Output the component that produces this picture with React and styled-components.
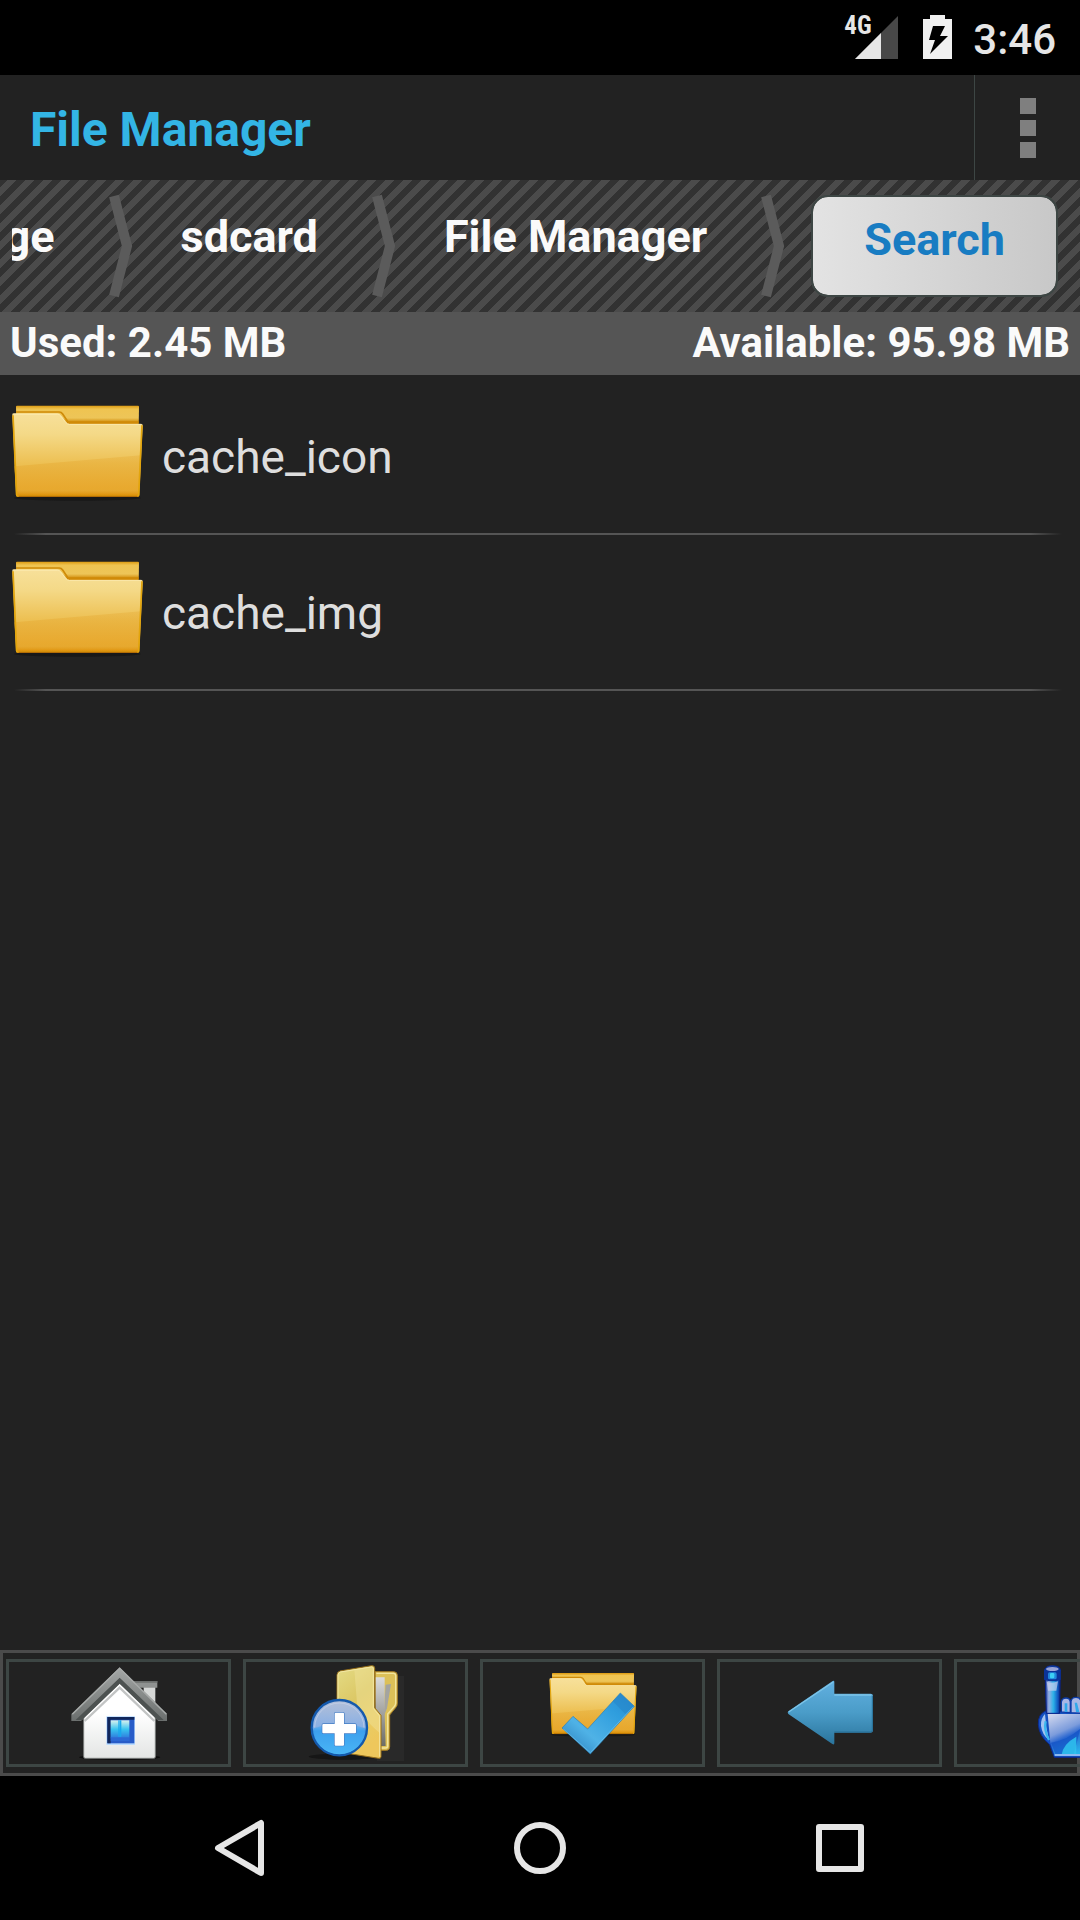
import React from 'react';
import styled, { createGlobalStyle } from 'styled-components';

const crumbs = ['storage', 'sdcard', 'File Manager'];
const folders = ['cache_icon', 'cache_img'];

const FolderShape = ({ id }) => (
  <>
    <defs>
      <linearGradient id={`${id}-back`} x1="0" y1="0" x2="0" y2="1">
        <stop offset="0" stopColor="#dc9a10" />
        <stop offset="0.04" stopColor="#efc451" />
        <stop offset="0.14" stopColor="#edc558" />
        <stop offset="0.19" stopColor="#d08a08" />
        <stop offset="1" stopColor="#c98208" />
      </linearGradient>
      <linearGradient id={`${id}-front`} x1="0" y1="0" x2="0" y2="1">
        <stop offset="0" stopColor="#f7e09a" />
        <stop offset="0.25" stopColor="#f4d987" />
        <stop offset="0.6" stopColor="#edc053" />
        <stop offset="0.92" stopColor="#e8b03a" />
        <stop offset="0.97" stopColor="#e09510" />
        <stop offset="1" stopColor="#b86e04" />
      </linearGradient>
      <linearGradient id={`${id}-low`} x1="0" y1="0" x2="0" y2="1">
        <stop offset="0" stopColor="#e5aa35" stopOpacity="0.35" />
        <stop offset="0.75" stopColor="#e8a62a" stopOpacity="0.7" />
        <stop offset="1" stopColor="#e09510" stopOpacity="0" />
      </linearGradient>
    </defs>
    <ellipse cx="232" cy="354" rx="190" ry="8" fill="#181818" />
    <path d="M48 80q0-3 3-3H414q3 0 3 3L413 340H52z" fill={`url(#${id}-back)`} />
    <path d="M48 96H178q6 0 10 6L204 126H416" fill="none" stroke="#cf8b08" strokeWidth="5" />
    <path
      d="M37 103q0-3 4-3H172q7 0 10 5l16 21q4 6 10 6H424q4 0 4 4L418 346q0 5-5 5H53q-5 0-5-5z"
      fill={`url(#${id}-front)`}
    />
    <path d="M43 259L422 226L416 350H50z" fill={`url(#${id}-low)`} />
    <path d="M39 106L50 345Q50 348 54 348H412Q416 348 416 345L426 136" fill="none" stroke="#e3a50c" strokeWidth="5" />
    <path d="M56 349H412" stroke="#b36c06" strokeWidth="4" />
    <path d="M42 103H172q7 0 10 5l16 20q4 5 10 5H424" fill="none" stroke="#fbe9ac" strokeWidth="3" />
  </>
);

const HomeIcon = () => (
  <svg viewBox="212 75 288 288" aria-hidden="true">
    <defs>
      <linearGradient id="wall" x1="0" y1="0" x2="0" y2="1">
        <stop offset="0.4" stopColor="#ffffff" />
        <stop offset="1" stopColor="#e3e5e4" />
      </linearGradient>
      <linearGradient id="roof" x1="0" y1="0" x2="0" y2="1">
        <stop offset="0" stopColor="#a4a7a6" />
        <stop offset="1" stopColor="#6b6f6e" />
      </linearGradient>
      <linearGradient id="pane" x1="0" y1="0" x2="0" y2="1">
        <stop offset="0" stopColor="#d9f2ee" />
        <stop offset="0.5" stopColor="#38c4f0" />
        <stop offset="1" stopColor="#2f78dc" />
      </linearGradient>
    </defs>
    <ellipse cx="358" cy="352" rx="122" ry="8" fill="#0c0c0c" />
    <path d="M430 140H465V200L430 165z" fill="#d6d8d7" />
    <path d="M400 123H471V143H412z" fill="#8f9291" />
    <path d="M400 123H471V128H404z" fill="#6b6e6d" />
    <path d="M358 128L250 230V350q0 5 5 5H460q5 0 5-5V230z" fill="url(#wall)" stroke="#777b7a" strokeWidth="3" />
    <path d="M253 243L358 143L462 243" fill="none" stroke="#c2c4c4" strokeWidth="7" />
    <path d="M358 82L501 222V243H474L358 131L242 243H213V222z" fill="url(#roof)" />
    <path d="M358 113L490 240H472L358 131L244 240H226z" fill="#4d5251" />
    <path d="M216 223L358 85L498 223" fill="none" stroke="#a8abaa" strokeWidth="4" />
    <rect x="318" y="229" width="86" height="86" rx="2" fill="#b9dcff" />
    <rect x="321" y="231" width="81" height="79" fill="#285cc8" />
    <path d="M321 231H402V239H331V310H321z" fill="#12275a" />
    <rect x="331" y="241" width="56" height="54" fill="url(#pane)" />
    <path d="M356 241V290M361 241V290" stroke="#18a8ee" strokeWidth="4" />
    <path d="M331 292H388V303H331z" fill="#2c68d4" />
  </svg>
);

const NewFolderIcon = () => (
  <svg viewBox="233 75 288 288" aria-hidden="true">
    <defs>
      <linearGradient id="cover" x1="0" y1="0" x2="0.4" y2="1">
        <stop offset="0" stopColor="#e4dc86" />
        <stop offset="0.45" stopColor="#dcc866" />
        <stop offset="0.75" stopColor="#e8cc64" />
        <stop offset="1" stopColor="#eec75c" />
      </linearGradient>
      <linearGradient id="paper" x1="0" y1="0" x2="0" y2="1">
        <stop offset="0" stopColor="#dcdcdc" />
        <stop offset="1" stopColor="#6c6c66" />
      </linearGradient>
      <linearGradient id="badge" x1="0" y1="0" x2="0" y2="1">
        <stop offset="0" stopColor="#b4c0d8" />
        <stop offset="0.48" stopColor="#8ab0e4" />
        <stop offset="0.56" stopColor="#3a98ea" />
        <stop offset="1" stopColor="#52c4fa" />
      </linearGradient>
    </defs>
    <rect x="440" y="108" width="81" height="255" fill="#292929" />
    <ellipse cx="340" cy="350" rx="105" ry="9" fill="#161616" />
    <path d="M434 95H490q11 0 11 11V190q0 8-5 13L478 225V320q0 11-10 11H440z" fill="#dcc058" stroke="#a37a24" strokeWidth="3" />
    <path d="M438 100H489q7 0 7 7V188q0 7-4 11L472 222V317q0 7-7 7H440" fill="none" stroke="#f2e49c" strokeWidth="4" />
    <path d="M466 134L482 132L470 205L460 230z" fill="#a4a4a0" />
    <path d="M436 112H463V222L466 318H446V225L436 205z" fill="url(#paper)" />
    <path d="M320 105q0-9 9-12L424 77q9-1 9 8V203L452 226V350q0 6-7 5L320 335z" fill="url(#cover)" stroke="#98701c" strokeWidth="3" />
    <path d="M372 88L424 80q5 0 5 6V205L449 229V280Q390 230 380 190z" fill="#f2e7a2" opacity="0.4" />
    <path d="M323 180V105q0-7 7-9L423 81q6-1 6 6V205L448 228V350" fill="none" stroke="#f3e7a4" strokeWidth="3" />
    <circle cx="327" cy="263" r="83" fill="url(#badge)" stroke="#1459ac" strokeWidth="7" />
    <path d="M251 266A76 76 0 0 0 403 266Q330 230 251 266z" fill="#40a8f2" opacity="0.5" />
    <path d="M253 263A74 74 0 0 1 401 263" fill="none" stroke="#c4d2ea" strokeWidth="3" opacity="0.7" />
    <path
      d="M316 218H338q3 0 3 3V252H374q3 0 3 3V277q0 3-3 3H341V314q0 3-3 3H316q-3 0-3-3V280H279q-3 0-3-3V255q0-3 3-3H313V221q0-3 3-3z"
      fill="#fff"
      stroke="#477ec4"
      strokeWidth="4"
      paintOrder="stroke"
    />
  </svg>
);

const SelectIcon = () => (
  <svg viewBox="224 75 288 288" aria-hidden="true">
    <defs>
      <linearGradient id="tick" x1="0" y1="1" x2="1" y2="0">
        <stop offset="0" stopColor="#2678b8" />
        <stop offset="0.35" stopColor="#4fb2e6" />
        <stop offset="0.7" stopColor="#2f9ede" />
        <stop offset="1" stopColor="#2888cc" />
      </linearGradient>
    </defs>
    <g transform="translate(213 48) scale(0.667)">
      <FolderShape id="select-folder" />
    </g>
    <path d="M275 264L308 229L352 267L450 159L492 199L360 342z" fill="url(#tick)" stroke="#2b7fb6" strokeWidth="2" />
    <path d="M279 267L360 338L489 200" fill="none" stroke="#6cc4f0" strokeWidth="3" opacity="0.7" />
    <path d="M428 184L450 161L490 199L465 222z" fill="#2484c8" opacity="0.5" />
  </svg>
);

const BackIcon = () => (
  <svg viewBox="245 75 288 288" aria-hidden="true">
    <defs>
      <linearGradient id="arrow" x1="0" y1="0" x2="0" y2="1">
        <stop offset="0" stopColor="#62b0e0" />
        <stop offset="0.5" stopColor="#4a9cc8" />
        <stop offset="1" stopColor="#2a749c" />
      </linearGradient>
    </defs>
    <path d="M264 214L396 124q6-4 6 3V161H511q7 0 7 7V270q0 8-7 8H402V309q0 7-6 3L264 222q-4-4 0-8z" fill="url(#arrow)" />
    <path d="M265 216L399 126M402 165H513" fill="none" stroke="#7cc4e8" strokeWidth="4" />
    <path d="M516 168V270q0 6-6 6H402" fill="none" stroke="#276f96" strokeWidth="3" />
  </svg>
);

const TouchIcon = () => (
  <svg viewBox="956 75 288 288" aria-hidden="true">
    <defs>
      <linearGradient id="palm" x1="0" y1="0" x2="0.5" y2="1">
        <stop offset="0" stopColor="#d8dcf0" />
        <stop offset="0.45" stopColor="#7c9cdc" />
        <stop offset="0.6" stopColor="#2c68d0" />
        <stop offset="1" stopColor="#28b4ec" />
      </linearGradient>
      <linearGradient id="finger" x1="0" y1="0" x2="1" y2="0">
        <stop offset="0" stopColor="#0a2c94" />
        <stop offset="0.25" stopColor="#98b0e4" />
        <stop offset="0.55" stopColor="#2cb0e8" />
        <stop offset="0.8" stopColor="#1464c8" />
        <stop offset="1" stopColor="#0a2484" />
      </linearGradient>
    </defs>
    <path d="M1038 212Q1012 222 1014 254Q1016 288 1048 314L1062 352H1164L1182 280V220Z" fill="#1450c0" stroke="#0b2a92" strokeWidth="3" />
    <path d="M1034 222Q1020 236 1022 258Q1026 286 1046 300L1038 262Z" fill="#a4c4f0" />
    <path d="M1036 244Q1030 270 1046 300" fill="none" stroke="#3bb6ee" strokeWidth="7" />
    <path d="M1034 88q2-10 22-11q22 1 24 11L1078 220H1038z" fill="url(#finger)" stroke="#0a2388" strokeWidth="3" />
    <path d="M1031 91q5-13 25-13t25 13V119q-25 9-50 0z" fill="#0b3398" />
    <ellipse cx="1056" cy="87" rx="19" ry="6" fill="#98a4d8" />
    <rect x="1043" y="97" width="26" height="21" rx="5" fill="#2188dc" />
    <rect x="1049" y="99" width="13" height="16" rx="4" fill="#3cd0f4" />
    <path d="M1039 125Q1056 132 1073 124L1068 152H1043z" fill="#cbd0ec" opacity="0.7" />
    <path d="M1083 216V186q2-12 14-12t13 12V218zM1112 218V184q2-12 15-12t15 12V220zM1145 222V194q2-12 14-12t13 12V224z" fill="#a9b7e4" stroke="#0c3ca8" strokeWidth="4" />
    <path d="M1093 190H1101V216H1093zM1123 188L1130 188L1137 216H1127zM1156 196H1164V220H1156z" fill="#30a8ea" />
    <path d="M1042 222H1180V278L1162 348H1064L1050 308Z" fill="url(#palm)" />
    <path d="M1052 308Q1100 300 1140 266L1120 345H1066z" fill="#0f50c4" opacity="0.65" />
    <path d="M1084 344Q1088 312 1128 290V344z" fill="#30c4ee" opacity="0.85" />
    <path d="M1063 345H1162" stroke="#8cb8f0" strokeWidth="6" />
  </svg>
);

const tools = [
  { label: 'Home', Icon: HomeIcon },
  { label: 'New folder', Icon: NewFolderIcon },
  { label: 'Select', Icon: SelectIcon },
  { label: 'Back', Icon: BackIcon },
  { label: 'Touch', Icon: TouchIcon },
];

const Chevron = () => (
  <ChevronIcon viewBox="0 0 32 108" aria-hidden="true">
    <path d="M7 4L20 54L7 104" fill="none" stroke="#5b5b5b" strokeWidth="10" />
  </ChevronIcon>
);

const App = () => (
  <Screen>
    <GlobalStyle />
    <StatusBar>
      <Network>
        <NetworkType>4G</NetworkType>
        <svg width="43" height="43" viewBox="0 0 43 43" aria-hidden="true">
          <path d="M43 0V43H0z" fill="#484848" />
          <path d="M26 17V43H0z" fill="#e6e6e6" />
        </svg>
      </Network>
      <svg width="29" height="44" viewBox="0 0 29 44" aria-hidden="true">
        <path d="M7 0H22V4H29V44H0V4H7z" fill="#f0f0f0" />
        <path d="M10 11H22L17 21H25L7 39L12 25H6z" fill="#000" />
      </svg>
      <Clock>3:46</Clock>
    </StatusBar>

    <TitleBar>
      <Title>File Manager</Title>
      <MenuButton aria-label="More options">
        <Dot />
        <Dot />
        <Dot />
      </MenuButton>
    </TitleBar>

    <PathBar>
      <Crumbs aria-label="Path">
        {crumbs.map(crumb => (
          <React.Fragment key={crumb}>
            <Crumb>{crumb}</Crumb>
            <Chevron />
          </React.Fragment>
        ))}
      </Crumbs>
      <SearchButton>Search</SearchButton>
    </PathBar>

    <Storage>
      <span>Used: 2.45 MB</span>
      <span>Available: 95.98 MB</span>
    </Storage>

    <List>
      {folders.map(name => (
        <ListItem key={name}>
          <Row>
            <FolderIcon viewBox="36 75 393 288" aria-hidden="true">
              <FolderShape id={name} />
            </FolderIcon>
            {name}
          </Row>
        </ListItem>
      ))}
    </List>

    <Toolbar>
      {tools.map(({ label, Icon }) => (
        <ToolButton key={label} aria-label={label}>
          <Icon />
        </ToolButton>
      ))}
    </Toolbar>

    <NavBar>
      <NavButton aria-label="Back">
        <svg width="60" height="60" viewBox="0 0 60 60">
          <path d="M8 30L51 5V55z" />
        </svg>
      </NavButton>
      <NavButton aria-label="Home">
        <svg width="60" height="60" viewBox="0 0 60 60">
          <circle cx="30" cy="30" r="23" />
        </svg>
      </NavButton>
      <NavButton aria-label="Recent apps">
        <svg width="60" height="60" viewBox="0 0 60 60">
          <rect x="9" y="9" width="42" height="42" />
        </svg>
      </NavButton>
    </NavBar>
  </Screen>
);

export default App;

const GlobalStyle = createGlobalStyle`
  * {
    box-sizing: border-box;
  }

  body {
    margin: 0;
    background: #222;
    font-family: Roboto, "Liberation Sans", sans-serif;
  }

  button {
    font-family: inherit;
    cursor: pointer;
  }
`;

const Screen = styled.div`
  display: flex;
  flex-direction: column;
  min-height: 100vh;
  overflow: hidden;
`;

const StatusBar = styled.div`
  display: flex;
  justify-content: flex-end;
  align-items: flex-start;
  height: 75px;
  padding: 15px 24px 0;
  background: #000;
`;

const Network = styled.div`
  position: relative;
  height: 44px;
  padding-top: 1px;
  margin-right: 25px;
`;

const NetworkType = styled.span`
  position: absolute;
  top: -1px;
  left: -11px;
  color: #e6e6e6;
  font-family: "Roboto Condensed", "Liberation Sans Narrow", Roboto, sans-serif;
  font-size: 25px;
  font-weight: 700;
  line-height: 24px;
`;

const Clock = styled.span`
  margin-left: 21px;
  color: #e6e6e6;
  font-size: 42px;
  font-weight: 500;
  line-height: 50px;
`;

const TitleBar = styled.header`
  display: flex;
  justify-content: space-between;
  align-items: center;
  height: 105px;
  padding-left: 30px;
  background: #222;
`;

const Title = styled.h1`
  margin: 0;
  padding-top: 3px;
  color: #33b5e5;
  font-size: 48px;
  font-weight: 700;
`;

const MenuButton = styled.button`
  display: flex;
  flex-direction: column;
  justify-content: center;
  align-items: center;
  gap: 6px;
  width: 106px;
  height: 100%;
  padding: 0;
  background: none;
  border: none;
  border-left: 1px solid #3d4644;
`;

const Dot = styled.span`
  width: 16px;
  height: 16px;
  background: #7f7f7f;
`;

const PathBar = styled.div`
  display: flex;
  align-items: center;
  gap: 20px;
  height: 132px;
  padding: 0 22px 0 12px;
  background: linear-gradient(135deg, #4b4b4b 25%, #323232 25% 50%, #4b4b4b 50% 75%, #323232 75%) 7px 0 / 18px 18px;
`;

const Crumbs = styled.nav`
  display: flex;
  flex: 1;
  justify-content: flex-end;
  align-items: center;
  min-width: 0;
  overflow: hidden;
`;

const Crumb = styled.button`
  flex: none;
  padding: 0 52px 18px 42px;
  background: none;
  border: none;
  color: #fafafa;
  font-size: 45px;
  font-weight: 700;
  line-height: 54px;
`;

const ChevronIcon = styled.svg`
  flex: none;
  width: 32px;
  height: 108px;
`;

const SearchButton = styled.button`
  height: 102px;
  padding: 0 51px 14px;
  background: linear-gradient(90deg, #e3e3e3, #c8c8c8) padding-box;
  border: 2px solid #3d4644;
  border-radius: 17px;
  color: #187cc2;
  font-size: 45px;
  font-weight: 700;
`;

const Storage = styled.div`
  display: flex;
  justify-content: space-between;
  align-items: center;
  height: 63px;
  padding: 0 10px 2px;
  background: #555;
  color: #fafafa;
  font-size: 42px;
  font-weight: 700;
`;

const List = styled.ul`
  flex: 1;
  margin: 0;
  padding: 4px 0 0;
  background: #222;
  list-style: none;
`;

const ListItem = styled.li`
  &::after {
    content: '';
    display: block;
    height: 2px;
    margin: 0 18px 0 14px;
    background: linear-gradient(90deg, transparent, #555 32px calc(100% - 32px), transparent);
  }
`;

const Row = styled.button`
  display: flex;
  align-items: center;
  gap: 19px;
  width: 100%;
  height: 154px;
  padding: 2px 12px 0;
  background: none;
  border: none;
  color: #dedede;
  font-size: 46px;
  text-align: left;
`;

const FolderIcon = styled.svg`
  width: 131px;
  height: 96px;
  margin-bottom: 8px;
`;

const Toolbar = styled.div`
  display: flex;
  gap: 12px;
  padding: 9px 6px;
  overflow: hidden;
  background: #222;
  box-shadow: inset 0 0 0 3px #4b4b4b;
`;

const ToolButton = styled.button`
  display: flex;
  flex: none;
  justify-content: center;
  align-items: center;
  width: 225px;
  height: 108px;
  padding: 0;
  background: none;
  border: 3px solid #3d4644;

  svg {
    width: 96px;
    height: 96px;
  }
`;

const NavBar = styled.nav`
  display: flex;
  justify-content: center;
  height: 144px;
  padding: 0 90px;
  background: #000;
`;

const NavButton = styled.button`
  display: flex;
  flex: 1;
  justify-content: center;
  align-items: center;
  max-width: 300px;
  padding: 0;
  background: none;
  border: none;

  svg {
    fill: none;
    stroke: #e6e6e6;
    stroke-width: 6;
    stroke-linejoin: round;
  }
`;
